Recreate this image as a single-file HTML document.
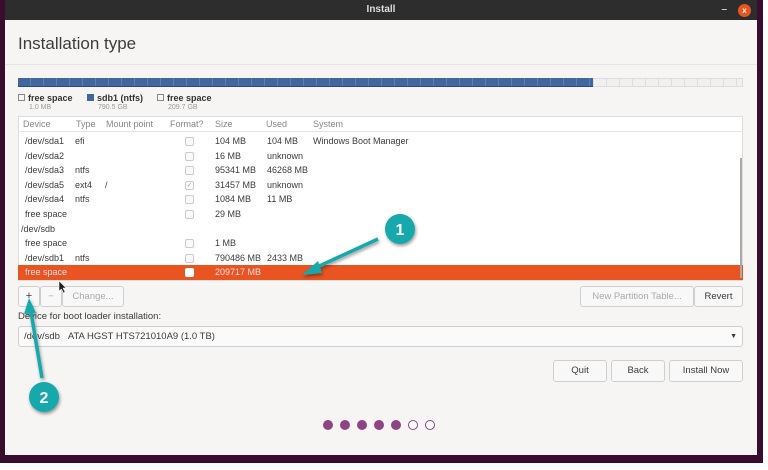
<!DOCTYPE html><html><head><style>
*{margin:0;padding:0;box-sizing:border-box}
body{width:768px;height:470px;background:#fff;position:relative;overflow:hidden;font-family:"Liberation Sans",sans-serif;font-size:9px;color:#3c3c3c}
.a{position:absolute}
.win{left:0;top:0;width:763px;height:463px;background:#3a0c2e}
.tb{left:5px;top:0;width:752px;height:20px;background:#2d2d2d;color:#ddd;font-size:10px;text-align:center;line-height:20px;font-weight:bold}
.ct{left:5px;top:20px;width:752px;height:435px;background:#f6f5f4}
.row{position:absolute;left:18px;width:725px;height:14.6px;line-height:14.6px}
.row span{position:absolute}
.cb{position:absolute;width:9px;height:9px;border:1px solid #ccc;border-radius:2px;background:#fafafa;top:3px;left:167px}
.btn{position:absolute;border:1px solid #cfcfcf;border-radius:3px;background:#f8f8f8;text-align:center;font-size:9.5px}
.dot{position:absolute;top:420px;width:10px;height:10px;border-radius:50%;background:#8e4585}
.dot.o{background:#fff;border:1px solid #8e4585}
</style></head><body>
<div class="a win"></div>
<div class="a tb">Install<span class="a" style="right:30px;top:0;color:#ccc">–</span><span class="a" style="right:6px;top:4px;width:13px;height:13px;border-radius:50%;background:#e95420;color:#fff;font-size:8px;line-height:13px">x</span></div>
<div class="a ct"></div>
<div class="a" style="left:18px;top:34px;font-size:17px;color:#3c3c3c">Installation type</div>
<div class="a" style="left:5px;top:64px;width:752px;height:1px;background:#e4e4e4"></div>
<div class="a" style="left:18px;top:78px;width:575px;height:9px;background:repeating-linear-gradient(90deg,#41679e 0 12px,#5a7fb4 12px 13px);border-bottom:1px solid #2c4c7c"></div>
<div class="a" style="left:593px;top:78px;width:150px;height:9px;background:repeating-linear-gradient(90deg,#f0f0f0 0 12px,#ddd 12px 13px);border:1px solid #ddd"></div>
<div class="a" style="left:18px;top:93px;font-weight:bold;color:#333"><span style="display:inline-block;width:7px;height:7px;border:1px solid #888;margin-right:3px"></span>free space</div>
<div class="a" style="left:29px;top:104px;font-size:7px;color:#999">1.0 MB</div>
<div class="a" style="left:87px;top:93px;font-weight:bold;color:#333"><span style="display:inline-block;width:7px;height:7px;background:#41679e;margin-right:3px"></span>sdb1 (ntfs)</div>
<div class="a" style="left:98px;top:104px;font-size:7px;color:#999">790.5 GB</div>
<div class="a" style="left:157px;top:93px;font-weight:bold;color:#333"><span style="display:inline-block;width:7px;height:7px;border:1px solid #888;margin-right:3px"></span>free space</div>
<div class="a" style="left:168px;top:104px;font-size:7px;color:#999">209.7 GB</div>
<div class="a" style="left:18px;top:116px;width:725px;height:165px;background:#fff;border:1px solid #ddd"></div>
<div class="row" style="top:117px;color:#888;border-bottom:1px solid #e4e4e4"><span style="left:5px">Device</span><span style="left:58px">Type</span><span style="left:88px">Mount point</span><span style="left:152px">Format?</span><span style="left:197px">Size</span><span style="left:248px">Used</span><span style="left:295px">System</span></div>
<div class="row" style="top:134px"><span style="left:7px">/dev/sda1</span><span style="left:57px">efi</span><i class="cb"></i><span style="left:197px">104 MB</span><span style="left:249px">104 MB</span><span style="left:295px">Windows Boot Manager</span></div>
<div class="row" style="top:148.6px"><span style="left:7px">/dev/sda2</span><i class="cb"></i><span style="left:197px">16 MB</span><span style="left:249px">unknown</span></div>
<div class="row" style="top:163.2px"><span style="left:7px">/dev/sda3</span><span style="left:57px">ntfs</span><i class="cb"></i><span style="left:197px">95341 MB</span><span style="left:249px">46268 MB</span></div>
<div class="row" style="top:177.8px"><span style="left:7px">/dev/sda5</span><span style="left:57px">ext4</span><span style="left:87px">/</span><i class="cb" style="font-size:7px;line-height:7px;color:#aaa;text-align:center;font-style:normal">✓</i><span style="left:197px">31457 MB</span><span style="left:249px">unknown</span></div>
<div class="row" style="top:192.4px"><span style="left:7px">/dev/sda4</span><span style="left:57px">ntfs</span><i class="cb"></i><span style="left:197px">1084 MB</span><span style="left:249px">11 MB</span></div>
<div class="row" style="top:207px"><span style="left:7px">free space</span><i class="cb"></i><span style="left:197px">29 MB</span></div>
<div class="row" style="top:221.6px"><span style="left:3px">/dev/sdb</span></div>
<div class="row" style="top:236.2px"><span style="left:7px">free space</span><i class="cb"></i><span style="left:197px">1 MB</span></div>
<div class="row" style="top:250.8px"><span style="left:7px">/dev/sdb1</span><span style="left:57px">ntfs</span><i class="cb"></i><span style="left:197px">790486 MB</span><span style="left:249px">2433 MB</span></div>
<div class="row" style="top:265.4px;background:#e95420;color:#fde"><span style="left:7px">free space</span><i class="cb" style="background:#fff;border-color:#fff"></i><span style="left:197px">209717 MB</span></div>
<div class="a" style="left:740px;top:158px;width:2px;height:120px;background:#aaa"></div>
<div class="btn" style="left:18px;top:286px;width:22px;height:21px;line-height:19px;font-size:11px">+</div>
<div class="btn" style="left:40px;top:286px;width:22px;height:21px;line-height:19px;color:#aaa">−</div>
<div class="btn" style="left:62px;top:286px;width:62px;height:21px;line-height:19px;color:#aaa">Change...</div>
<div class="btn" style="left:580px;top:286px;width:114px;height:21px;line-height:19px;color:#aaa">New Partition Table...</div>
<div class="btn" style="left:694px;top:286px;width:49px;height:21px;line-height:19px">Revert</div>
<div class="a" style="left:18px;top:311px;font-size:9.5px">Device for boot loader installation:</div>
<div class="btn" style="left:18px;top:326px;width:725px;height:21px;line-height:19px;text-align:left;padding-left:5px;background:#fafafa">/dev/sdb&nbsp;&nbsp;&nbsp;ATA HGST HTS721010A9 (1.0 TB)<span style="position:absolute;right:5px;font-size:7px">▼</span></div>
<div class="btn" style="left:553px;top:360px;width:54px;height:22px;line-height:20px">Quit</div>
<div class="btn" style="left:611px;top:360px;width:54px;height:22px;line-height:20px">Back</div>
<div class="btn" style="left:669px;top:360px;width:74px;height:22px;line-height:20px">Install Now</div>
<div class="dot" style="left:323px"></div><div class="dot" style="left:340px"></div><div class="dot" style="left:357px"></div><div class="dot" style="left:374px"></div><div class="dot" style="left:391px"></div><div class="dot o" style="left:408px"></div><div class="dot o" style="left:425px"></div>
<svg class="a" style="left:0;top:0" width="768" height="470">
<defs><filter id="s"><feDropShadow dx="1" dy="2" stdDeviation="1.5" flood-opacity="0.4"/></filter></defs>
<g filter="url(#s)" fill="#17a8ab" stroke="#17a8ab">
<line x1="378" y1="239" x2="315" y2="268" stroke-width="3.5"/>
<polygon points="302,275 318,261 322,273" stroke="none"/>
<circle cx="400" cy="229" r="15" stroke="none"/>
<line x1="42" y1="378" x2="31" y2="312" stroke-width="3.5"/>
<polygon points="29,298 24,314 36,313" stroke="none"/>
<circle cx="44" cy="397" r="15" stroke="none"/>
</g>
<text x="400" y="235" fill="#fff" font-size="16" font-weight="bold" text-anchor="middle" font-family="Liberation Sans">1</text>
<text x="44" y="403" fill="#fff" font-size="16" font-weight="bold" text-anchor="middle" font-family="Liberation Sans">2</text>
<path d="M59 281 l0 10 l2.5 -2 l2 4 l1.5 -1 l-2 -4 l3 0z" fill="#222" stroke="#fff" stroke-width="0.5"/>
</svg>
</body></html>
